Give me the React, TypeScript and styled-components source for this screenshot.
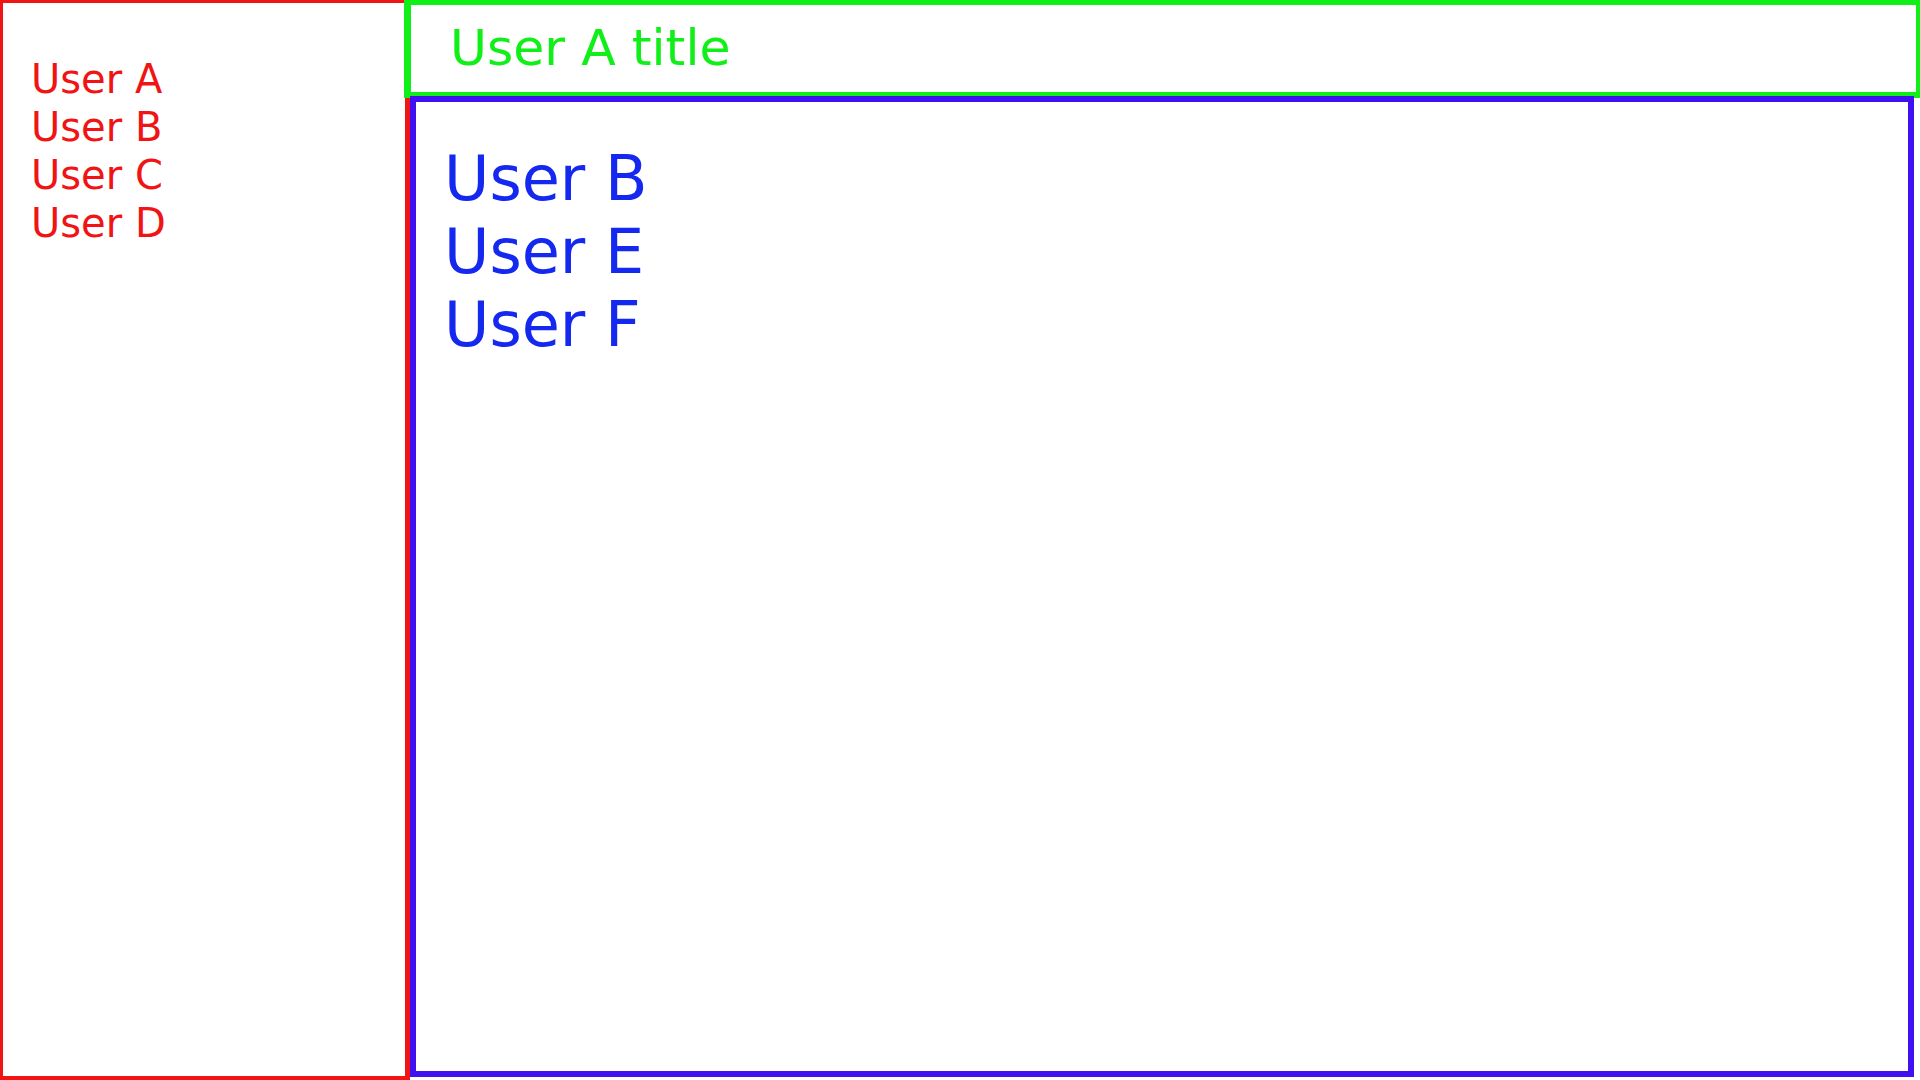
import React from "react";
import styled, { createGlobalStyle } from "styled-components";

const GlobalStyle = createGlobalStyle`
  html, body {
    margin: 0;
    padding: 0;
    background: #ffffff;
    overflow: hidden;
  }
  * {
    box-sizing: border-box;
  }
`;

const Layout = styled.div`
  display: grid;
  grid-template-columns: 410px 1fr;
  grid-template-rows: 98px 1fr;
  width: 1920px;
  height: 1080px;
  font-family: "DejaVu Sans", "Liberation Sans", sans-serif;
`;

const Sidebar = styled.nav`
  grid-column: 1;
  grid-row: 1 / span 2;
  border-style: solid;
  border-color: #f01414;
  border-width: 3px 5px 4px 3px;
  padding: 52px 0 0 28px;
  display: flex;
  flex-direction: column;
`;

const SidebarItem = styled.div`
  color: #f01414;
  font-size: 40px;
  line-height: 48px;
`;

const Header = styled.header`
  grid-column: 2;
  grid-row: 1;
  margin-left: -6px;
  border-style: solid;
  border-color: #10f018;
  border-width: 5px 4px 6px 7px;
  padding: 13px 0 0 39px;
`;

const Title = styled.h1`
  margin: 0;
  color: #10f018;
  font-size: 50.5px;
  font-weight: normal;
  line-height: normal;
`;

const Content = styled.main`
  grid-column: 2;
  grid-row: 2;
  margin: -2px 6px 3px 0;
  border: 6px solid #4010f0;
  padding: 40px 0 0 28px;
  display: flex;
  flex-direction: column;
`;

const ContentItem = styled.div`
  color: #1428f0;
  font-size: 62px;
  line-height: normal;
`;

const sidebarUsers = ["User A", "User B", "User C", "User D"];
const contentUsers = ["User B", "User E", "User F"];

const App: React.FC = () => (
  <>
    <GlobalStyle />
    <Layout>
      <Sidebar>
        {sidebarUsers.map((name) => (
          <SidebarItem key={name}>{name}</SidebarItem>
        ))}
      </Sidebar>
      <Header>
        <Title>User A title</Title>
      </Header>
      <Content>
        {contentUsers.map((name) => (
          <ContentItem key={name}>{name}</ContentItem>
        ))}
      </Content>
    </Layout>
  </>
);

export default App;
